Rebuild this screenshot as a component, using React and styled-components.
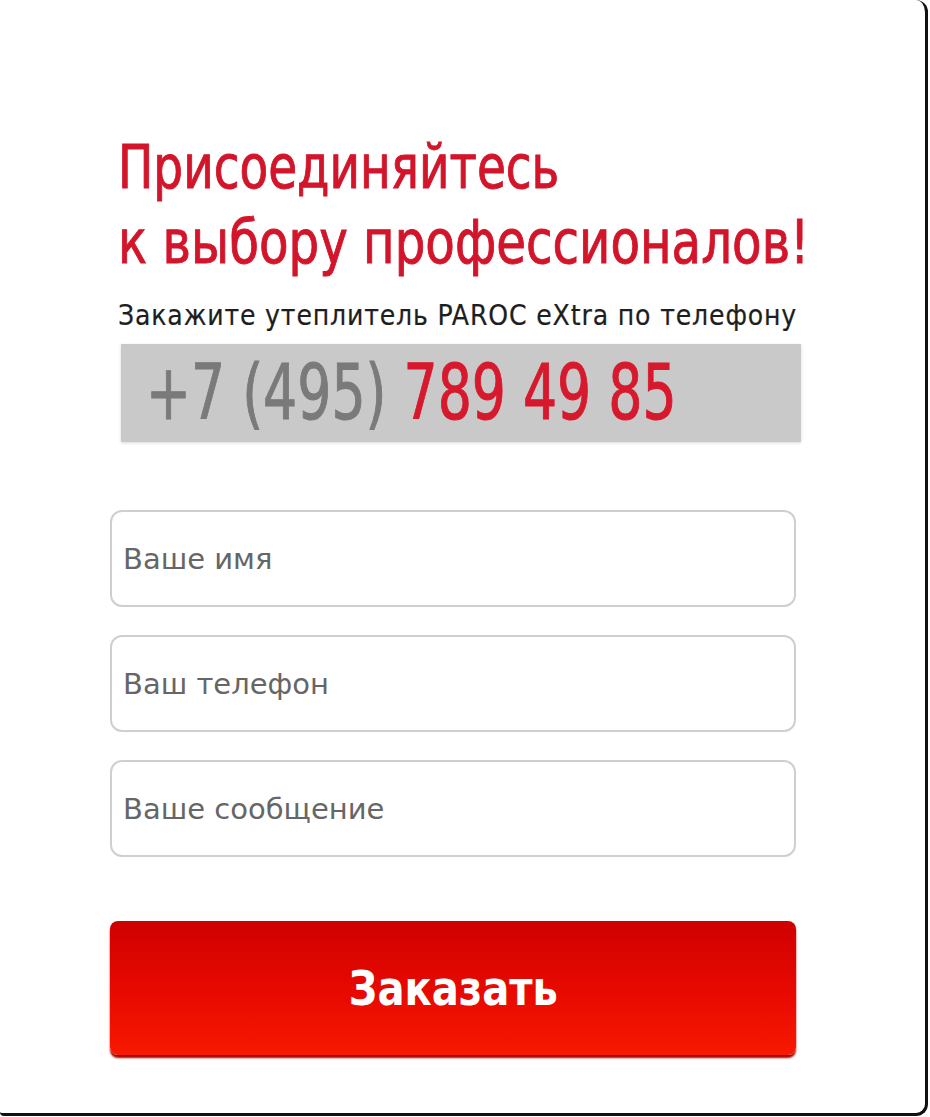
import React from "react";
import styled, { createGlobalStyle } from "styled-components";

const GlobalStyle = createGlobalStyle`
  html, body {
    margin: 0;
    padding: 0;
    background: #fff;
  }
  * {
    box-sizing: border-box;
  }
`;

const narrowFont = `"DejaVu Sans Condensed", "DejaVu Sans", sans-serif`;

// the original face is narrower than DejaVu Condensed, so squeeze it a bit more
const Narrow = styled.span`
  display: inline-block;
  white-space: nowrap;
  transform: scaleX(${(p) => p.$k || 0.88});
  transform-origin: ${(p) => (p.$center ? "center" : "left")} center;
`;

const Card = styled.div`
  width: 928px;
  height: 1116px;
  background: #fff;
  border-right: 3px solid #111;
  border-bottom: 3px solid #111;
  border-radius: 2px 12px 12px 4px;
  padding: 130px 0 0 110px;
`;

const Content = styled.div`
  width: 686px;
  display: flex;
  flex-direction: column;
`;

const Title = styled.h1`
  margin: 0 0 0 8px;
  font-family: ${narrowFont};
  font-weight: 400;
  font-size: 60px;
  line-height: 75px;
  color: #d2152b;
  -webkit-text-stroke: 0.9px #d2152b;
  white-space: nowrap;
`;

const Subtitle = styled.p`
  margin: 16px 0 0 8px;
  font-family: ${narrowFont};
  font-size: 28px;
  line-height: 40px;
  letter-spacing: 0.85px;
  color: #1e1e1e;
  -webkit-text-stroke: 0.2px #1e1e1e;
  white-space: nowrap;
`;

const PhoneBox = styled.div`
  margin: 8px 0 0 11px;
  width: 680px;
  height: 98px;
  background: #c9c9c9;
  box-shadow: 0 1px 3px rgba(0, 0, 0, 0.15);
  padding-left: 25px;
  display: flex;
  align-items: center;
  font-family: ${narrowFont};
  font-size: 76px;
  line-height: 1;
  white-space: nowrap;
`;

const PhonePart = styled.span`
  color: ${(p) => (p.$accent ? "#d7192d" : "#7a7a7a")};
  -webkit-text-stroke: 1px ${(p) => (p.$accent ? "#d7192d" : "#7a7a7a")};
`;

const Form = styled.form`
  margin-top: 68px;
  display: flex;
  flex-direction: column;
  gap: 28px;
`;

const Field = styled.input`
  width: 686px;
  height: 97px;
  border: 2px solid #cfcfcf;
  border-radius: 12px;
  padding: 0 0 0 11px;
  font-family: "DejaVu Sans", sans-serif;
  font-size: 29px;
  color: #333;
  outline: none;
  &::placeholder {
    color: #666;
  }
`;

const Submit = styled.button`
  margin-top: 36px;
  width: 686px;
  height: 134px;
  border: none;
  border-radius: 8px;
  background: linear-gradient(to bottom, #cf0000 0%, #e80a00 55%, #f81900 100%);
  box-shadow: 0 3px 2px #a80000;
  color: #fff;
  font-family: ${narrowFont};
  font-weight: 700;
  font-size: 48px;
  cursor: pointer;
`;

export default function App() {
  return (
    <>
      <GlobalStyle />
      <Card>
        <Content>
          <Title>
            <Narrow $k={0.87}>Присоединяйтесь</Narrow>
            <br />
            <Narrow $k={0.895}>к выбору профессионалов!</Narrow>
          </Title>
          <Subtitle>Закажите утеплитель PAROC eXtra по телефону</Subtitle>
          <PhoneBox>
            <Narrow $k={0.785}>
              <PhonePart>+7 (495)&nbsp;</PhonePart>
              <PhonePart $accent>789 49 85</PhonePart>
            </Narrow>
          </PhoneBox>
          <Form onSubmit={(e) => e.preventDefault()}>
            <Field placeholder="Ваше имя" />
            <Field placeholder="Ваш телефон" />
            <Field placeholder="Ваше сообщение" />
            <Submit type="submit">
              <Narrow $k={0.93} $center>
                Заказать
              </Narrow>
            </Submit>
          </Form>
        </Content>
      </Card>
    </>
  );
}
